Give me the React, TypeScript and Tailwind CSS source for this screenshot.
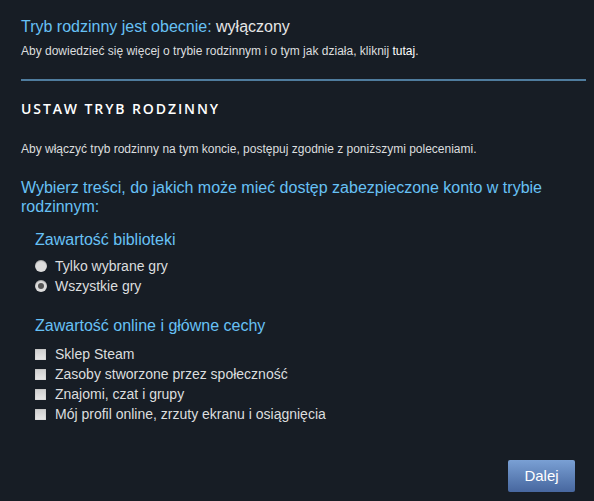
import React from "react";

const font = { fontFamily: "Arial, 'Liberation Sans', sans-serif" };

function Radio({ checked }: { checked?: boolean }) {
  return (
    <span className="relative inline-flex h-[12px] w-[12px] shrink-0 items-center justify-center rounded-full bg-[#dcdcdc] shadow-[inset_0_1px_1px_rgba(0,0,0,0.25)]">
      {checked && <span className="h-[6px] w-[6px] rounded-full bg-[#555]" />}
    </span>
  );
}

function Check() {
  return (
    <span className="inline-block h-[11px] w-[11px] shrink-0 bg-gradient-to-b from-[#cfcfcf] to-[#e8e8e8] shadow-[inset_0_0_1px_rgba(0,0,0,0.4)]" />
  );
}

export default function App() {
  return (
    <div
      className="flex min-h-[501px] w-[594px] flex-col bg-[#171d25] px-[21px] pt-[17px] text-[#c6d4df]"
      style={font}
    >
      <div className="text-[16px] leading-[19px] text-[#67c1f5]">
        Tryb rodzinny jest obecnie: <span className="text-[#e6e6e6]">wyłączony</span>
      </div>
      <div className="mt-[8px] text-[12px] leading-[14px] text-[#dcdedf]">
        Aby dowiedzieć się więcej o trybie rodzinnym i o tym jak działa, kliknij{" "}
        <span className="text-white">tutaj</span>.
      </div>
      <div className="mt-[21px] h-[2px] w-[565px] bg-[#4f7c9e]" />

      <div
        className="mt-[20px] text-[14px] font-semibold leading-[16px] tracking-[1.9px] text-white"
        style={{ fontFamily: "'Open Sans', Arial, sans-serif" }}
      >
        USTAW TRYB RODZINNY
      </div>
      <div className="mt-[25px] text-[12px] leading-[14px] text-[#dcdedf]">
        Aby włączyć tryb rodzinny na tym koncie, postępuj zgodnie z poniższymi poleceniami.
      </div>

      <div className="mt-[22px] text-[16px] leading-[19px] text-[#67c1f5]">
        Wybierz treści, do jakich może mieć dostęp zabezpieczone konto w trybie rodzinnym:
      </div>

      <div className="ml-[14px] mt-[14px]">
        <div className="text-[16px] leading-[19px] text-[#67c1f5]">Zawartość biblioteki</div>
        <div className="mt-[7px] flex flex-col">
          <label className="flex h-[20px] items-center gap-[8px] text-[14px] text-[#dcdedf]">
            <Radio />
            Tylko wybrane gry
          </label>
          <label className="flex h-[20px] items-center gap-[8px] text-[14px] text-[#dcdedf]">
            <Radio checked />
            Wszystkie gry
          </label>
        </div>

        <div className="mt-[20px] text-[16px] leading-[19px] text-[#67c1f5]">
          Zawartość online i główne cechy
        </div>
        <div className="mt-[9px] flex flex-col">
          {[
            "Sklep Steam",
            "Zasoby stworzone przez społeczność",
            "Znajomi, czat i grupy",
            "Mój profil online, zrzuty ekranu i osiągnięcia",
          ].map((t) => (
            <label key={t} className="flex h-[20px] items-center gap-[9px] text-[14px] text-[#dcdedf]">
              <Check />
              {t}
            </label>
          ))}
        </div>
      </div>

      <div className="mt-auto flex justify-end pb-[9px]">
        <button className="mr-[-2px] h-[32px] w-[67px] rounded-[2px] bg-gradient-to-b from-[#7aa0d4] to-[#47679f] text-[15px] text-white">
          Dalej
        </button>
      </div>
    </div>
  );
}
